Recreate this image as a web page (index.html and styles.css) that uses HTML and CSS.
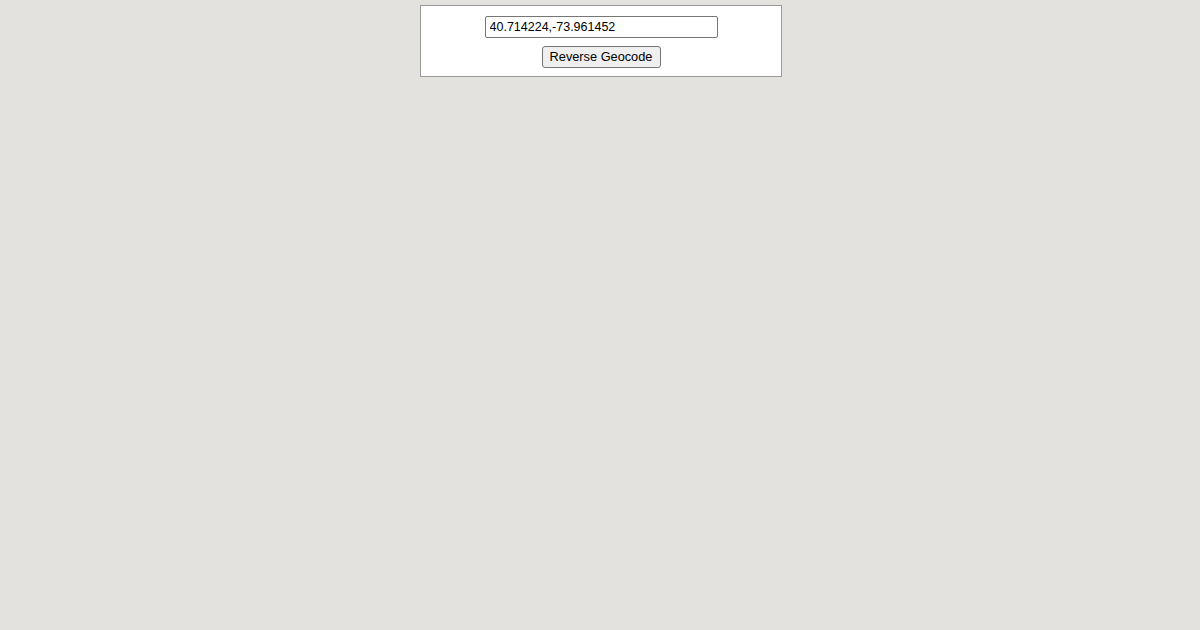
FILE: index.html
```html
<!DOCTYPE html>
<html>
<head>
<meta charset="utf-8">
<link rel="stylesheet" href="styles.css">
</head>
<body>
<div class="map">
  <div class="panel">
    <input class="latlng" type="text" value="40.714224,-73.961452">
    <button class="submit" type="button">Reverse Geocode</button>
  </div>
</div>
</body>
</html>
```
FILE: styles.css
```css
html, body {
  margin: 0;
  padding: 0;
  height: 100%;
}
body {
  background: #e3e2de;
  font-family: "Liberation Sans", Arial, sans-serif;
}
.map {
  height: 100%;
  display: flex;
  justify-content: center;
  align-items: flex-start;
  padding-top: 5px;
  box-sizing: border-box;
}
.panel {
  margin-left: 1px;
  width: 359px;
  background: #fff;
  border: 1px solid #999;
  padding: 10px 0 8px 1px;
  display: flex;
  flex-direction: column;
  align-items: center;
}
.latlng {
  box-sizing: border-box;
  width: 233px;
  height: 22px;
  margin: 0;
  padding: 0 3px 1px 4px;
  font-family: "Liberation Sans", Arial, sans-serif;
  font-size: 12.5px;
  color: #000;
  border: 1px solid #767676;
  border-radius: 2px;
  background: #fff;
}
.submit {
  box-sizing: border-box;
  margin-top: 8px;
  width: 119px;
  height: 22px;
  padding: 0 6px 1px;
  font-family: "Liberation Sans", Arial, sans-serif;
  font-size: 12.75px;
  color: #000;
  background: #efefef;
  border: 1px solid #767676;
  border-radius: 3px;
}
```
